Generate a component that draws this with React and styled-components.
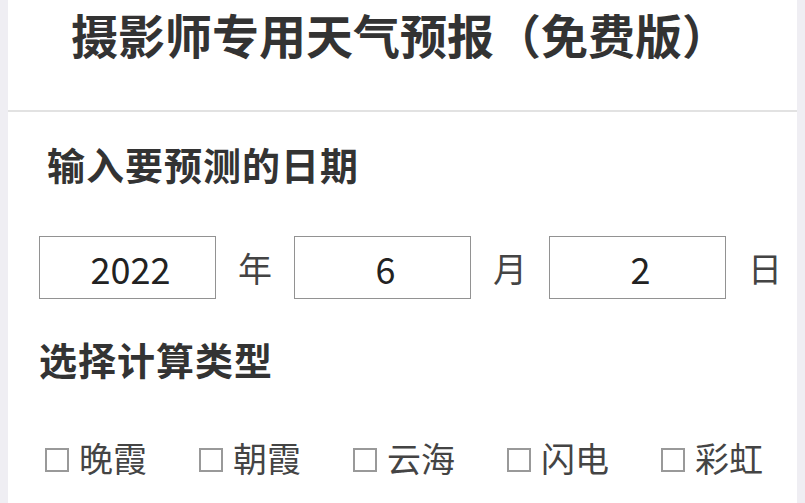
import styled, { createGlobalStyle } from "styled-components"

const Global = createGlobalStyle`
  html, body {
    margin: 0;
    padding: 0;
    background: #efeef3;
  }
  body {
    font-family: "Noto Sans CJK SC", "Noto Sans", sans-serif;
  }
`

const Pagina = styled.div`
  margin: 0 8px;
  height: 503px;
  background: #ffffff;
  overflow: hidden;
`

const Cabecalho = styled.header`
  height: 112px;
  border-bottom: 2px solid #e2e2e2;
  padding-left: 63px;
  box-sizing: border-box;
`

const Titulo = styled.h1`
  margin: 0;
  font-size: 47px;
  line-height: 68px;
  font-weight: 700;
  color: #333333;
  white-space: nowrap;
`

const Conteudo = styled.main`
  padding: 24px 0 0 31px;
  display: flex;
  flex-direction: column;
`

const Secao = styled.h2`
  margin: 0;
  padding-left: ${({ $recuo }) => $recuo || 0}px;
  font-size: 38px;
  line-height: 56px;
  letter-spacing: 1px;
  font-weight: 700;
  color: #333333;
`

const LinhaData = styled.div`
  display: flex;
  align-items: center;
  gap: 22px;
  margin: 44px 0 32px;
`

const Caixa = styled.input`
  width: 177px;
  height: 63px;
  box-sizing: border-box;
  border: 1px solid #929292;
  border-radius: 0;
  background: #fff;
  text-align: center;
  font-family: "Noto Sans CJK SC", "Noto Sans", sans-serif;
  font-size: 36px;
  color: #222222;
  outline: none;
  padding: 0 0 0 6px;
`

const Unidade = styled.span`
  font-size: 34px;
  line-height: 50px;
  color: #444444;
`

const ListaTipos = styled.div`
  display: flex;
  gap: 52px;
  margin-top: 46px;
  padding-left: 6px;
`

const Opcao = styled.label`
  display: flex;
  align-items: center;
  gap: 10px;
  font-size: 34px;
  line-height: 50px;
  color: #444444;
  cursor: pointer;
`

const Quadrado = styled.span`
  width: 24px;
  height: 24px;
  box-sizing: border-box;
  border: 2px solid #999999;
  margin-top: 4px;
  background: #fff;
`

const tipos = ["晚霞", "朝霞", "云海", "闪电", "彩虹"]

export default function App() {
  return (
    <>
      <Global />
      <Pagina>
        <Cabecalho>
          <Titulo>摄影师专用天气预报（免费版）</Titulo>
        </Cabecalho>
        <Conteudo>
          <Secao $recuo={8}>输入要预测的日期</Secao>
          <LinhaData>
            <Caixa defaultValue="2022" />
            <Unidade>年</Unidade>
            <Caixa defaultValue="6" />
            <Unidade>月</Unidade>
            <Caixa defaultValue="2" />
            <Unidade>日</Unidade>
          </LinhaData>
          <Secao>选择计算类型</Secao>
          <ListaTipos>
            {tipos.map((t) => (
              <Opcao key={t}>
                <Quadrado />
                {t}
              </Opcao>
            ))}
          </ListaTipos>
        </Conteudo>
      </Pagina>
    </>
  )
}
